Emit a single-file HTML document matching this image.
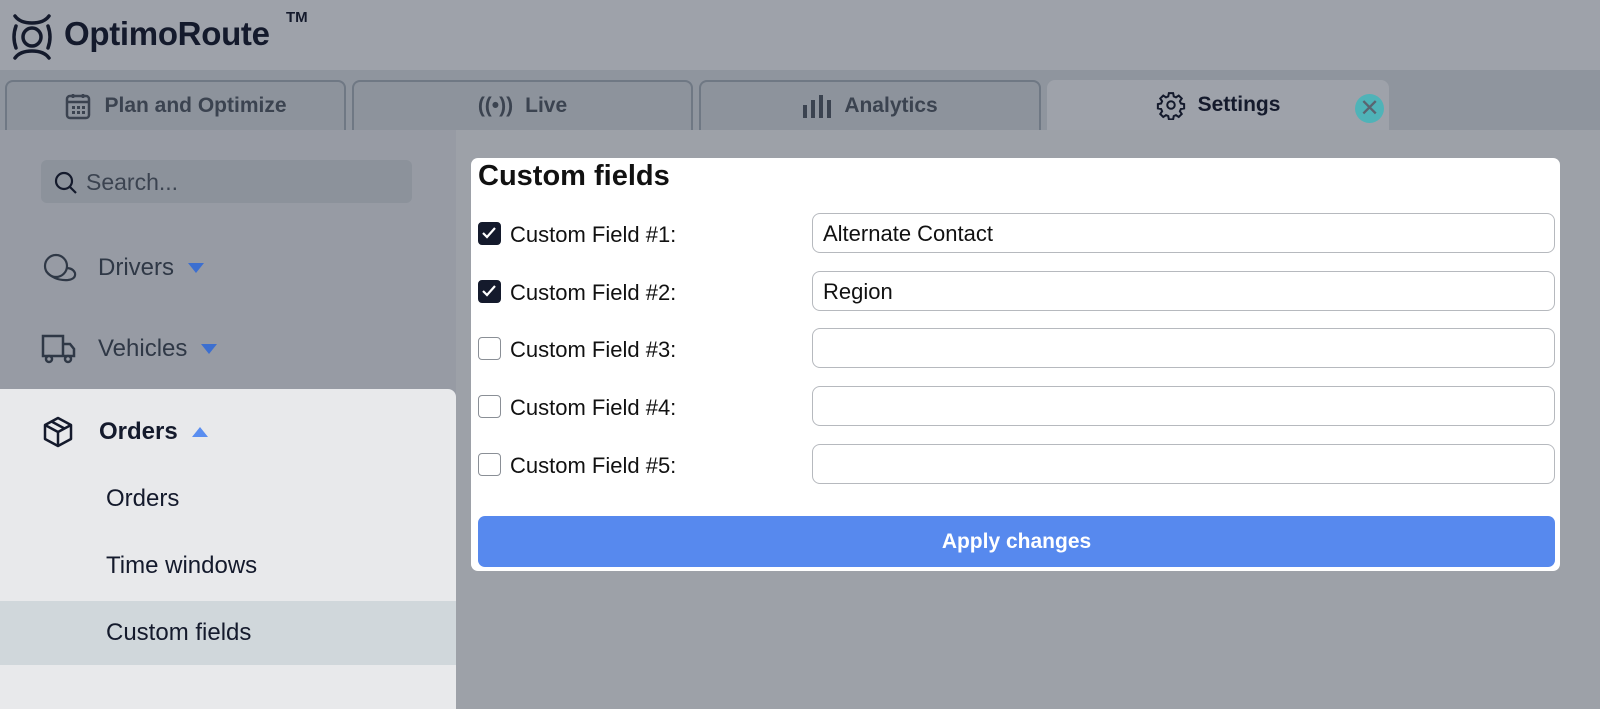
<!DOCTYPE html>
<html><head><style>
*{box-sizing:border-box;margin:0;padding:0}
body{width:1600px;height:709px;overflow:hidden;background:#9ea2a9;font-family:"Liberation Sans",Arial,sans-serif;position:relative}
.abs{position:absolute}
.header{left:0;top:0;width:1600px;height:70px;background:#9ea2aa}
.tabbar{left:0;top:70px;width:1600px;height:60px;background:#8f959e}
.tab{top:80px;height:50px;border:2px solid #6f7884;border-bottom:none;border-radius:8px 8px 0 0;background:#8d939c;display:flex;align-items:center;justify-content:center;font-weight:bold;font-size:21px;color:#3b4350;gap:12px}
.side{left:0;top:130px;width:456px;height:579px;background:#979ba4}
.main{left:456px;top:130px;width:1144px;height:579px;background:#9da1a8}
.nav{font-size:24px;color:#2f3846;display:flex;align-items:center}
.tri{width:0;height:0;border-left:8px solid transparent;border-right:8px solid transparent;margin-left:14px}
.card{left:471px;top:158px;width:1089px;height:413px;background:#fff;border-radius:7px}
.row{position:absolute;left:7px;height:40px;width:1077px}
.cb{position:absolute;left:0;top:9px;width:23px;height:23px;border:1.5px solid #8a8f96;border-radius:4px;background:#fff}
.cb.on{background:#141a2c;border-color:#141a2c}
.lbl{position:absolute;left:32px;top:9px;font-size:22px;color:#111}
.inp{position:absolute;left:334px;top:0;width:743px;height:40px;border:1.5px solid #b6b9be;border-radius:8px;font-size:22px;padding:7px 10px;color:#111}
</style></head><body>
<div class="abs header"></div>
<svg class="abs" style="left:10px;top:12px" width="44" height="50" viewBox="0 0 44 50" fill="none" stroke="#141a2c" stroke-width="3.5" stroke-linecap="round">
<circle cx="22" cy="25" r="9"/><path d="M5 4 Q10 11 22 11 Q34 11 39 4"/><path d="M5 46 Q10 39 22 39 Q34 39 39 46"/><path d="M6 14 Q2 25 6 36"/><path d="M38 14 Q42 25 38 36"/></svg>
<div class="abs" style="left:64px;top:15px;font-size:33px;font-weight:bold;color:#141a2c;letter-spacing:-0.3px">OptimoRoute</div>
<div class="abs" style="left:286px;top:9px;font-size:15px;font-weight:bold;color:#141a2c">TM</div>
<div class="abs tabbar"></div>
<div class="abs tab" style="left:5px;width:341px"><svg width="28" height="28" viewBox="0 0 28 28" fill="none" stroke="#3b4350" stroke-width="2.5"><rect x="3" y="4" width="22" height="22" rx="3"/><path d="M3 10h22M9 2v4M19 2v4"/><g fill="#3b4350" stroke="none"><rect x="8" y="14" width="3" height="3"/><rect x="13" y="14" width="3" height="3"/><rect x="18" y="14" width="3" height="3"/><rect x="8" y="19" width="3" height="3"/><rect x="13" y="19" width="3" height="3"/><rect x="18" y="19" width="3" height="3"/></g></svg>Plan and Optimize</div>
<div class="abs tab" style="left:352px;width:341px"><span style="font-weight:bold">((•))</span>Live</div>
<div class="abs tab" style="left:699px;width:342px"><svg width="30" height="26" viewBox="0 0 30 26" fill="#3b4350"><rect x="1" y="12" width="4" height="13"/><rect x="9" y="7" width="4" height="18"/><rect x="17" y="2" width="4" height="23"/><rect x="25" y="7" width="4" height="18"/></svg>Analytics</div>
<div class="abs tab" style="left:1047px;width:342px;background:#9ea2aa;border:none;color:#141a2c"><svg width="30" height="30" viewBox="0 0 24 24" fill="none" stroke="#141a2c" stroke-width="1.6"><circle cx="12" cy="12" r="3"/><path d="M10.3 2.5h3.4l.5 2.6 1.8.8 2.2-1.5 2.4 2.4-1.5 2.2.8 1.8 2.6.5v3.4l-2.6.5-.8 1.8 1.5 2.2-2.4 2.4-2.2-1.5-1.8.8-.5 2.6h-3.4l-.5-2.6-1.8-.8-2.2 1.5-2.4-2.4 1.5-2.2-.8-1.8-2.6-.5v-3.4l2.6-.5.8-1.8-1.5-2.2 2.4-2.4 2.2 1.5 1.8-.8z"/></svg>Settings</div>
<div class="abs" style="left:1355px;top:94px;width:29px;height:29px;border-radius:50%;background:#4fb3b8;color:#5a6470;font-size:24px;line-height:29px;text-align:center">✕</div>
<div class="abs side"></div>
<div class="abs main"></div>
<div class="abs" style="left:41px;top:160px;width:371px;height:43px;background:#8c929b;border-radius:6px"></div>
<svg class="abs" style="left:53px;top:170px" width="26" height="26" viewBox="0 0 26 26" fill="none" stroke="#141a2c" stroke-width="2.2"><circle cx="11" cy="11" r="8"/><path d="M17 17l6 6"/></svg>
<div class="abs" style="left:86px;top:169px;font-size:23px;color:#3b4350">Search...</div>
<div class="abs nav" style="left:42px;top:253px"><svg width="36" height="30" viewBox="0 0 36 30" fill="none" stroke="#2f3846" stroke-width="2.2"><circle cx="14" cy="13" r="11"/><path d="M4 18 Q12 28 26 27 Q34 26 33 20 Q31 15 24 15"/></svg><span style="margin-left:20px">Drivers</span><span class="tri" style="border-top:10px solid #3c6fd0"></span></div>
<div class="abs nav" style="left:41px;top:334px"><svg width="36" height="30" viewBox="0 0 36 30" fill="none" stroke="#2f3846" stroke-width="2.5"><path d="M2 2h20v20H2zM22 10h7l4 5v7H22"/><circle cx="8" cy="25" r="3" fill="#979ba4"/><circle cx="27" cy="25" r="3" fill="#979ba4"/></svg><span style="margin-left:21px">Vehicles</span><span class="tri" style="border-top:10px solid #3c6fd0"></span></div>
<div class="abs" style="left:0;top:389px;width:456px;height:320px;background:#e8e9eb;border-radius:0 8px 0 0"></div>
<div class="abs" style="left:0;top:601px;width:456px;height:64px;background:#d0d7db"></div>
<div class="abs nav" style="left:42px;top:416px;color:#141a2c;font-weight:bold"><svg width="32" height="32" viewBox="0 0 32 32" fill="none" stroke="#141a2c" stroke-width="2.5" stroke-linejoin="round"><path d="M16 2L29 9v14L16 30 3 23V9z"/><path d="M3 9l13 7 13-7M16 16v14M9.5 5.5l13 7"/></svg><span style="margin-left:25px">Orders</span><span class="tri" style="border-bottom:10px solid #5a8ef0"></span></div>
<div class="abs" style="left:106px;top:485px;font-size:24px;color:#141a2c">Orders</div>
<div class="abs" style="left:106px;top:552px;font-size:24px;color:#141a2c">Time windows</div>
<div class="abs" style="left:106px;top:619px;font-size:24px;color:#141a2c">Custom fields</div>
<div class="abs card">
<div class="abs" style="left:7px;top:2px;font-size:29px;font-weight:bold;color:#111">Custom fields</div>
<div class="row" style="top:55px"><div class="cb on"><svg width="20" height="20" viewBox="0 0 20 20"><path d="M4 10l4 4 8-9" fill="none" stroke="#fff" stroke-width="2.2"/></svg></div><div class="lbl">Custom Field #1:</div><div class="inp">Alternate Contact</div></div>
<div class="row" style="top:113px"><div class="cb on"><svg width="20" height="20" viewBox="0 0 20 20"><path d="M4 10l4 4 8-9" fill="none" stroke="#fff" stroke-width="2.2"/></svg></div><div class="lbl">Custom Field #2:</div><div class="inp">Region</div></div>
<div class="row" style="top:170px"><div class="cb"></div><div class="lbl">Custom Field #3:</div><div class="inp"></div></div>
<div class="row" style="top:228px"><div class="cb"></div><div class="lbl">Custom Field #4:</div><div class="inp"></div></div>
<div class="row" style="top:286px"><div class="cb"></div><div class="lbl">Custom Field #5:</div><div class="inp"></div></div>
<div class="abs" style="left:7px;top:358px;width:1077px;height:51px;background:#5789ee;border-radius:7px;color:#fff;font-weight:bold;font-size:21px;text-align:center;line-height:51px">Apply changes</div>
</div>
</body></html>
